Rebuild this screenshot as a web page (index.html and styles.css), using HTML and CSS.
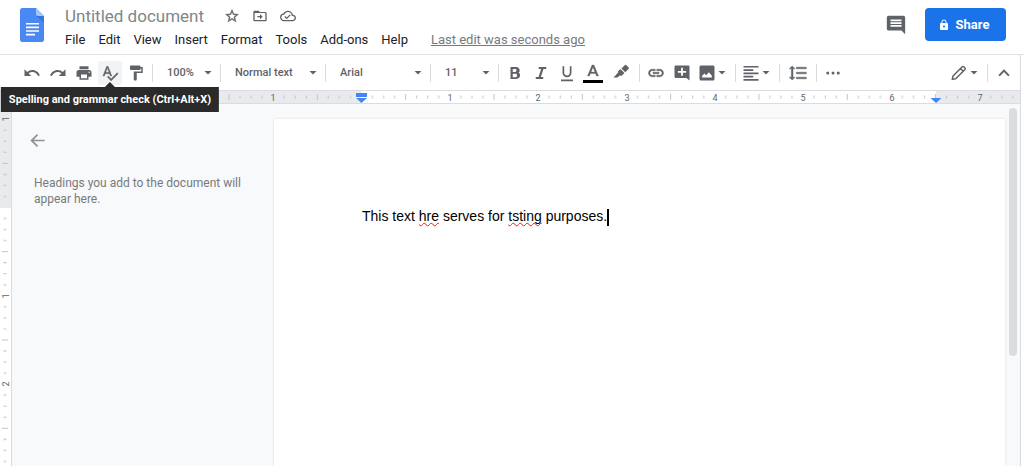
FILE: index.html
```
<!DOCTYPE html>
<html lang="en">
<head>
<meta charset="utf-8">
<title>Untitled document</title>
<link rel="stylesheet" href="styles.css">
</head>
<body>
<header class="header">
  <svg class="logo" viewBox="0 0 24 34" aria-hidden="true">
    <path fill="#4a88f4" d="M2.500 0H16l8 8v23.500a2.500 2.500 0 0 1-2.500 2.500h-19A2.500 2.500 0 0 1 0 31.500v-29A2.500 2.500 0 0 1 2.500 0z"/>
    <path fill="#3a75e0" d="M16 8h8v7z"/>
    <path fill="#a6c5fa" d="M16 0l8 8h-6a2 2 0 0 1-2-2z"/>
    <path fill="#fff" d="M6 15h13v1.600H6zM6 18.600h13v1.600H6zM6 22.200h13v1.600H6zM6 25.800h9v1.600H6z"/>
  </svg>
  <div class="heading">
    <div class="title-row">
      <h1 class="title">Untitled document</h1>
      <button class="title-button" aria-label="Star"><svg viewBox="0 0 24 24"><path stroke="#5f6368" stroke-width=".4" d="M22 9.240l-7.190-.62L12 2 9.190 8.630 2 9.240l5.460 4.730L5.820 21 12 17.270 18.180 21l-1.630-7.030L22 9.240zM12 15.400l-3.760 2.270 1-4.280-3.320-2.880 4.380-.38L12 6.100l1.710 4.040 4.380.38-3.320 2.880 1 4.280L12 15.400z"/></svg></button>
      <button class="title-button" aria-label="Move"><svg viewBox="0 0 24 24"><path d="M20 6h-8l-2-2H4c-1.100 0-2 .9-2 2v12c0 1.100.9 2 2 2h16c1.100 0 2-.9 2-2V8c0-1.100-.9-2-2-2zm0 12H4V7.500h16V18zm-8-1l4-4-4-4v3H8v2h4z"/></svg></button>
      <button class="title-button" aria-label="Document status"><svg viewBox="0 0 24 24"><path d="M19.350 10.040C18.670 6.590 15.640 4 12 4 9.110 4 6.600 5.640 5.350 8.040 2.340 8.360 0 10.910 0 14c0 3.310 2.690 6 6 6h13c2.760 0 5-2.240 5-5 0-2.640-2.050-4.780-4.650-4.960zM19 18H6c-2.210 0-4-1.790-4-4 0-2.050 1.530-3.760 3.560-3.970l1.070-.11.5-.95C8.080 7.140 9.940 6 12 6c2.620 0 4.880 1.860 5.390 4.430l.3 1.500 1.530.11c1.560.1 2.780 1.410 2.780 2.960 0 1.650-1.350 3-3 3zm-9-3.820l-2.090-2.090L6.500 13.500 10 17l6.010-6.010-1.410-1.410z"/></svg></button>
    </div>
    <div class="menu-row">
      <nav class="menus" aria-label="Menus">
        <button class="menu">File</button>
        <button class="menu">Edit</button>
        <button class="menu">View</button>
        <button class="menu">Insert</button>
        <button class="menu">Format</button>
        <button class="menu">Tools</button>
        <button class="menu">Add-ons</button>
        <button class="menu">Help</button>
      </nav>
      <a class="last-edit" href="#">Last edit was seconds ago</a>
    </div>
  </div>
  <div class="header-actions">
    <button class="comments" aria-label="Comment history"><svg viewBox="0 0 24 24"><path d="M21.990 4c0-1.100-.89-2-1.990-2H4c-1.100 0-2 .9-2 2v12c0 1.100.9 2 2 2h14l4 4-.01-18zM18 14H6v-2h12v2zm0-3H6V9h12v2zm0-3H6V6h12v2z"/></svg></button>
    <button class="share"><svg viewBox="0 0 24 24"><path d="M18 8h-1V6c0-2.760-2.240-5-5-5S7 3.240 7 6v2H6c-1.100 0-2 .9-2 2v10c0 1.100.9 2 2 2h12c1.100 0 2-.9 2-2V10c0-1.100-.9-2-2-2zm-6 9c-1.100 0-2-.9-2-2s.9-2 2-2 2 .9 2 2-.9 2-2 2zm3.100-9H8.900V6c0-1.710 1.390-3.100 3.100-3.100s3.100 1.390 3.100 3.100v2z"/></svg>Share</button>
  </div>
</header>

<div class="workspace">
  <div class="toolbar" role="toolbar" aria-label="Main toolbar">
    <div class="group">
      <button class="tool" aria-label="Undo"><svg viewBox="0 0 24 24"><path d="M12.500 8c-2.650 0-5.050.99-6.900 2.600L2 7v9h9l-3.620-3.620c1.390-1.160 3.160-1.880 5.120-1.880 3.540 0 6.550 2.310 7.600 5.500l2.370-.78C21.080 11.030 17.150 8 12.500 8z"/></svg></button>
      <button class="tool" aria-label="Redo"><svg viewBox="0 0 24 24"><path d="M18.400 10.600C16.550 8.990 14.150 8 11.500 8c-4.650 0-8.580 3.030-9.960 7.220L3.900 16c1.050-3.190 4.050-5.500 7.600-5.500 1.950 0 3.730.72 5.120 1.880L13 16h9V7l-3.600 3.600z"/></svg></button>
      <button class="tool" aria-label="Print"><svg viewBox="0 0 24 24"><path d="M19 8H5c-1.660 0-3 1.340-3 3v6h4v4h12v-4h4v-6c0-1.660-1.340-3-3-3zm-3 11H8v-5h8v5zm3-7c-.55 0-1-.45-1-1s.45-1 1-1 1 .45 1 1-.45 1-1 1zm-1-9H6v4h12V3z"/></svg></button>
      <button class="tool hovered" aria-describedby="spell-tip" aria-label="Spelling and grammar check"><svg viewBox="0 0 24 24"><path stroke="#5f6368" stroke-width=".4" d="M12.450 16h2.090L9.430 3H7.570L2.460 16h2.090l1.120-3h5.640l1.140 3zm-6.020-5L8.500 5.480 10.570 11H6.430zm15.160.59l-8.090 8.090L9.830 16l-1.410 1.410 5.090 5.090L23 13l-1.410-1.410z"/></svg><span class="tooltip" id="spell-tip" role="tooltip">Spelling and grammar check (Ctrl+Alt+X)</span></button>
      <button class="tool" aria-label="Paint format"><svg viewBox="0 0 24 24"><path d="M18 4V3c0-.55-.45-1-1-1H5c-.55 0-1 .45-1 1v4c0 .55.45 1 1 1h12c.55 0 1-.45 1-1V6h1v4H9v11c0 .55.45 1 1 1h2c.55 0 1-.45 1-1v-9h8V4h-3z"/></svg></button>
    </div>
    <span class="separator"></span>
    <div class="picker narrow"><select aria-label="Zoom"><option>100%</option></select><i class="caret"></i></div>
    <span class="separator"></span>
    <div class="picker"><select aria-label="Styles"><option>Normal text</option></select><i class="caret"></i></div>
    <span class="separator"></span>
    <div class="picker"><select aria-label="Font"><option>Arial</option></select><i class="caret"></i></div>
    <span class="separator"></span>
    <div class="picker narrow"><select aria-label="Font size"><option>11</option></select><i class="caret"></i></div>
    <span class="separator"></span>
    <div class="group">
      <button class="tool" aria-label="Bold"><svg viewBox="0 0 24 24"><path d="M16.600 11.790c.97-.67 1.650-1.770 1.650-2.790 0-2.760-1.940-5-4.750-5H6v16h8.040c2.590 0 4.710-2.240 4.710-4.840 0-1.890-1.070-3.510-2.150-3.370zM9 6.500h3.500c.83 0 1.500.67 1.500 1.500s-.67 2.500-1.500 2.500H9v-4zm4 11H9v-4.500h4c.83 0 1.900 1.170 1.900 2.200S13.830 17.500 13 17.500z"/></svg></button>
      <button class="tool" aria-label="Italic"><svg viewBox="0 0 24 24"><path d="M9 4v2.800h3.200L8.700 17.200H5V20h10v-2.800h-3.200l3.500-10.400H19V4z"/></svg></button>
      <button class="tool" aria-label="Underline"><svg viewBox="0 0 24 24"><path d="M12 17.500c3.310 0 6-2.690 6-6V3h-2.300v8.500c0 2-1.640 3.700-3.700 3.700s-3.700-1.700-3.700-3.700V3H6v8.500c0 3.310 2.690 6 6 6zM4 20.500V23h16v-2.500H4z"/></svg></button>
      <button class="tool" aria-label="Text color"><svg class="tall" viewBox="0 0 20 20"><path stroke="#5f6368" stroke-width=".3" d="M9 2L4.500 13h2l1-2.500h5l1 2.500h2L11 2zm-.9 6.900L10 4.200l1.900 4.700z"/><path fill="#000" d="M0 17h20v3H0z"/></svg></button>
      <button class="tool wide" aria-label="Highlight color"><svg viewBox="0 0 24 24"><path d="M17 1.500a1.500 1.500 0 0 1 2.100 0l2.900 2.900a1.500 1.500 0 0 1 0 2.100l-4.400 4.400-5-5zM11.600 6.900l5 5-3 3c-1 1-2.400 1.100-3.500.5L7.500 18H2l6.200-6.700c-.5-1 .4-2.400 1-3z"/></svg></button>
    </div>
    <span class="separator"></span>
    <div class="group">
      <button class="tool" aria-label="Insert link"><svg viewBox="0 0 24 24"><path d="M3.900 12c0-1.710 1.390-3.100 3.100-3.100h4V7H7c-2.760 0-5 2.240-5 5s2.240 5 5 5h4v-1.900H7c-1.710 0-3.100-1.390-3.100-3.100zM8 13h8v-2H8v2zm9-6h-4v1.900h4c1.710 0 3.100 1.390 3.100 3.100s-1.390 3.100-3.100 3.100h-4V17h4c2.760 0 5-2.240 5-5s-2.240-5-5-5z" stroke="#5f6368" stroke-width=".6"/></svg></button>
      <button class="tool" aria-label="Add comment"><svg viewBox="0 0 24 24"><path d="M3.500 2h17A1.500 1.500 0 0 1 22 3.500V22l-4-3.500H3.500A1.500 1.500 0 0 1 2 17V3.500A1.500 1.500 0 0 1 3.500 2zM13.200 5h-2.400v4.200H6.500v2.400h4.300v4.200h2.400v-4.200h4.300V9.200h-4.300z" fill-rule="evenodd"/></svg></button>
      <button class="tool split" aria-label="Insert image"><svg viewBox="0 0 24 24"><path fill-rule="evenodd" d="M22 20V4c0-1.100-.9-2-2-2H4c-1.100 0-2 .9-2 2v16c0 1.100.9 2 2 2h16c1.100 0 2-.9 2-2zM5.500 18v-2.500l3-3 2.500 2.500 3.500-4 4 4.500V18z"/></svg><i class="caret"></i></button>
    </div>
    <span class="separator"></span>
    <div class="group">
      <button class="tool split" aria-label="Align"><svg viewBox="0 0 24 24"><path d="M2 2.500h20v2.300H2zM2 6.900h13v2.300H2zM2 11.300h20v2.300H2zM2 15.700h13V18H2zM2 20.100h20v2.300H2z"/></svg><i class="caret"></i></button>
    </div>
    <span class="separator"></span>
    <div class="group">
      <button class="tool wide" aria-label="Line spacing"><svg class="tall" viewBox="0 0 24 24"><path d="M6 7h2.500L5 3.500 1.500 7H4v10H1.500L5 20.500 8.500 17H6V7zm4-2v2h12V5H10zm0 14h12v-2H10v2zm0-6h12v-2H10v2z" stroke="#5f6368" stroke-width=".5"/></svg></button>
    </div>
    <span class="separator"></span>
    <div class="group">
      <button class="tool" aria-label="More"><svg viewBox="0 0 24 24"><circle cx="5" cy="12" r="2"/><circle cx="12" cy="12" r="2"/><circle cx="19" cy="12" r="2"/></svg></button>
    </div>
    <div class="group end">
      <button class="tool split" aria-label="Editing mode"><svg viewBox="0 0 24 24"><path fill="none" stroke="#5f6368" stroke-width="2" stroke-linejoin="round" d="M3 20.500l1-4.500L16 4a2 2 0 0 1 2.800 0l.9.900a2 2 0 0 1 0 2.800L7.500 19.700zM14 6l3.700 3.700"/></svg><i class="caret"></i></button>
    </div>
    <span class="separator"></span>
    <div class="group">
      <button class="tool" aria-label="Hide the menus"><svg viewBox="0 0 24 24"><path d="M12 7l-7.500 7.500 1.900 1.900 5.600-5.600 5.600 5.600 1.900-1.900z"/></svg></button>
    </div>
  </div>

  <div class="ruler">
    <svg width="100%" height="12" aria-label="Horizontal ruler">
      <defs>
        <pattern id="inch-x" x="361.500" width="88.320" height="12" patternUnits="userSpaceOnUse">
          <path stroke="#c0c3c7" d="M11 4.500v3M22.100 4.500v3M33.100 4.500v3M44.200 3v6M55.200 4.500v3M66.200 4.500v3M77.300 4.500v3"/>
        </pattern>
      </defs>
      <rect class="margin" width="361" height="12"/>
      <rect class="margin" x="936" width="100%" height="12"/>
      <rect fill="url(#inch-x)" width="100%" height="12"/>
      <g class="numbers">
        <text x="273" y="10">1</text><text x="450" y="10">1</text><text x="538" y="10">2</text><text x="627" y="10">3</text><text x="715" y="10">4</text><text x="803" y="10">5</text><text x="892" y="10">6</text><text x="980" y="10">7</text>
      </g>
      <path fill="#4285f4" d="M356 2h11v4h-11zM356 7h11l-5.500 5zM930.500 7h11L936 12z"/>
    </svg>
  </div>

  <main class="main">
    <div class="side-ruler">
      <svg width="11" height="100%" aria-label="Vertical ruler">
        <defs>
          <pattern id="inch-y" y="103.500" width="11" height="88.320" patternUnits="userSpaceOnUse">
            <path stroke="#c0c3c7" d="M3.500 11h3M3.500 22.100h3M3.500 33.100h3M2 44.200h6M3.500 55.200h3M3.500 66.200h3M3.500 77.300h3"/>
          </pattern>
        </defs>
        <rect class="margin" width="11" height="104"/>
        <rect fill="url(#inch-y)" width="11" height="100%"/>
        <g class="numbers">
          <text transform="translate(9 15) rotate(-90)">1</text><text transform="translate(9 192) rotate(-90)">1</text><text transform="translate(9 280) rotate(-90)">2</text>
        </g>
      </svg>
    </div>
    <aside class="outline">
      <button class="back" aria-label="Close document outline"><svg viewBox="0 0 24 24"><path d="M21 10.900H7.200l5.600-5.600L11.300 3.700 3 12l8.300 8.300 1.500-1.600-5.600-5.600H21z"/></svg></button>
      <p class="outline-hint">Headings you add to the document will appear here.</p>
    </aside>
    <article class="page">
      <p class="text">This text <span class="misspelled">hre</span> serves for <span class="misspelled">tsting</span> purposes.<span class="cursor"></span></p>
    </article>
    <div class="scrollbar"><div class="thumb"></div></div>
  </main>
</div>
</body>
</html>
```

FILE: styles.css
```
* {
  box-sizing: border-box;
}

body {
  margin: 0;
  height: 100vh;
  display: flex;
  flex-direction: column;
  overflow: hidden;
  background: #fff;
  color: #3c4043;
  font-family: Roboto, "Liberation Sans", sans-serif;
  font-size: 13px;
}

button {
  margin: 0;
  padding: 0;
  border: 0;
  background: none;
  color: inherit;
  font: inherit;
}

svg {
  display: block;
  flex: none;
  fill: #5f6368;
}

.header {
  display: flex;
  padding: 8px 18px 4px 20px;
  border-bottom: 1px solid #e0e2e5;
}

.logo {
  width: 24px;
  height: 34px;
}

.heading {
  margin-left: 21px;
}

.title-row {
  display: flex;
  align-items: center;
  height: 16px;
}

.title {
  margin: 0 14px 0 0;
  color: #80868b;
  font-size: 17px;
  font-weight: 400;
  line-height: 16px;
}

.title-button {
  width: 28px;
  display: flex;
  justify-content: center;
}

.title-button svg {
  width: 16px;
  height: 16px;
}

.menu-row {
  display: flex;
  align-items: center;
  height: 26px;
  padding-top: 6px;
  line-height: 16px;
}

.menus {
  display: flex;
  gap: 13px;
}

.menu {
  color: #202124;
}

.last-edit {
  margin-left: 23px;
  color: #777a7e;
}

.header-actions {
  display: flex;
  align-items: flex-start;
  gap: 18px;
  margin-left: auto;
}

.comments {
  height: 34px;
}

.comments svg {
  width: 22px;
  height: 22px;
}

.share {
  display: flex;
  align-items: center;
  justify-content: center;
  gap: 6px;
  width: 81px;
  height: 33px;
  padding-right: 4px;
  border-radius: 4px;
  background: #1a73e8;
  color: #fff;
  font-weight: 700;
}

.share svg {
  width: 12px;
  height: 12px;
  fill: #fff;
}

.workspace {
  flex: 1;
  min-height: 0;
  display: flex;
  flex-direction: column;
  margin-right: 3px;
  border-right: 1px solid #dadce0;
}

.toolbar {
  display: flex;
  align-items: center;
  height: 35px;
  padding: 0 2px 0 18px;
}

.group {
  display: flex;
  gap: 2px;
  padding: 0 2px;
}

.group.end {
  margin-left: auto;
}

.tool {
  position: relative;
  display: flex;
  align-items: center;
  justify-content: center;
  width: 24px;
  height: 24px;
  border-radius: 2px;
}

.tool svg {
  width: 18px;
  height: 18px;
}

.tool svg.tall {
  width: 20px;
  height: 20px;
}

.tool.wide {
  width: 28px;
}

.tool.split {
  width: 35px;
  justify-content: space-between;
  padding: 0 5px 0 2px;
}

.tool.hovered {
  background: #f1f3f4;
}

.separator {
  width: 1px;
  height: 18px;
  margin: 0 2px;
  background: #dadce0;
}

.caret {
  width: 8px;
  height: 4px;
  background: #5f6368;
  clip-path: polygon(0 0, 100% 0, 50% 100%);
}

.picker {
  display: grid;
  align-items: center;
  width: 100px;
}

.picker.narrow {
  width: 63px;
}

.picker select,
.picker .caret {
  grid-area: 1 / 1;
}

.picker select {
  appearance: none;
  width: 100%;
  height: 24px;
  margin: 0;
  padding: 0 0 0 12px;
  border: 0;
  background: none;
  color: #5f6368;
  font: 500 11px Roboto, "Liberation Sans", sans-serif;
}

.picker .caret {
  justify-self: end;
  margin-right: 6px;
  pointer-events: none;
}

.tooltip {
  position: absolute;
  z-index: 2;
  top: 26px;
  left: 50%;
  transform: translateX(-50%);
  padding: 0 8px;
  background: #2a2a2a;
  color: #fff;
  font-size: 11px;
  font-weight: 700;
  line-height: 25px;
  white-space: nowrap;
}

.tooltip::before {
  content: "";
  position: absolute;
  bottom: 100%;
  left: 50%;
  margin-left: -5px;
  border: 5px solid transparent;
  border-top: 0;
  border-bottom-color: #2a2a2a;
}

.ruler {
  border: solid #dadce0;
  border-width: 1px 0;
}

.margin {
  fill: #e8eaed;
}

.numbers {
  fill: #5f6368;
  font-size: 9px;
  text-anchor: middle;
}

.main {
  flex: 1;
  min-height: 0;
  display: flex;
  background: #f8f9fa;
}

.side-ruler {
  border-right: 1px solid #dadce0;
  background: #fff;
}

.outline {
  width: 262px;
  padding: 27px 22px 0;
}

.back svg {
  width: 19px;
  height: 19px;
  margin-left: -6px;
  fill: #8f9296;
}

.back {
  display: block;
}

.outline-hint {
  margin: 25px 0 0;
  color: #777a7e;
  font-size: 12px;
  line-height: 16px;
}

.page {
  flex: 1;
  margin-top: 15px;
  padding: 88px;
  background: #fff;
  box-shadow: 0 0 2px #d5d7da;
}

.text {
  margin: 0;
  color: #000;
  font-family: "Liberation Sans", sans-serif;
  font-size: 14px;
  line-height: 18px;
}

.misspelled {
  text-decoration: underline wavy #e02020 1px;
  text-decoration-skip-ink: none;
  text-underline-offset: 1px;
}

.cursor {
  display: inline-block;
  width: 2px;
  height: 17px;
  background: #000;
  vertical-align: middle;
}

.scrollbar {
  width: 15px;
  padding: 4px 3px 0 4px;
}

.thumb {
  height: 248px;
  border-radius: 4px;
  background: #dadce0;
}
```
